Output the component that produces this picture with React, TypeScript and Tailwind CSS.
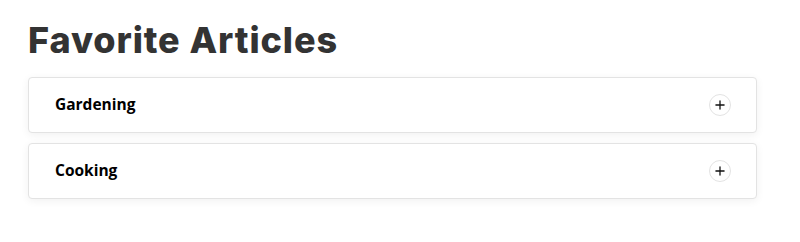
import { Plus } from "lucide-react";

const articles = ["Gardening", "Cooking"];

function AccordionItem({ title }: { title: string }) {
  return (
    <div className="h-[56px] flex items-center justify-between pl-[26px] pr-[25px] bg-white border border-[#e3e3e3] rounded-[4px] shadow-[0_2px_8px_rgba(0,0,0,0.06)]">
      <span className="text-[15.5px] font-bold text-black font-['Open_Sans',sans-serif]">
        {title}
      </span>
      <button className="w-[22px] h-[22px] rounded-full border border-[#e3e3e3] flex items-center justify-center text-[#111]">
        <Plus size={14} strokeWidth={2.2} />
      </button>
    </div>
  );
}

export default function App() {
  return (
    <div className="min-h-screen bg-white pl-[28px] pr-[43px] pt-[18px]">
      <h1 className="text-[36px] leading-[44px] font-extrabold text-[#333] tracking-[0.025em] font-['Inter',sans-serif]">
        Favorite Articles
      </h1>
      <div className="mt-[15px] flex flex-col gap-[10px]">
        {articles.map((a) => (
          <AccordionItem key={a} title={a} />
        ))}
      </div>
    </div>
  );
}
